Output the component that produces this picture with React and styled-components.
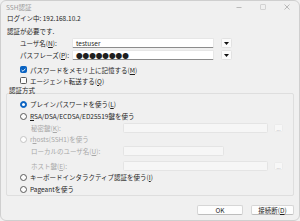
import React from "react";
import styled, { createGlobalStyle } from "styled-components";

let Global = createGlobalStyle`
  html, body {
    margin: 0;
    padding: 0;
    background: #f0f0f0;
  }
  body {
    font-family: "Noto Sans CJK JP", "Noto Sans", sans-serif;
    font-size: 6.5px;
    color: #1f1f1f;
  }
`;

let Window = styled.div`
  box-sizing: border-box;
  width: 300px;
  height: 221px;
  border: 1px solid #cfcfcf;
  border-radius: 6px;
  background: #f0f0f0;
  display: flex;
  flex-direction: column;
  overflow: hidden;
`;

let TitleBar = styled.div`
  height: 11px;
  display: flex;
  align-items: center;
  padding-left: 5px;
  color: #9a9a9a;
`;

let TitleText = styled.span`
  flex: 1;
`;

let Controls = styled.div`
  display: flex;
  align-items: center;
`;

let Control = styled.span`
  width: 24px;
  height: 11px;
  display: flex;
  align-items: center;
  justify-content: center;
`;

let Body = styled.div`
  padding: 0 5px;
  display: flex;
  flex-direction: column;
`;

let InfoLine = styled.div`
  line-height: 13px;
  height: 13px;
  padding-left: 1px;
`;

let FieldRow = styled.div`
  display: flex;
  align-items: center;
  height: 10px;
  margin-top: ${p => p.$top || 0}px;
  padding-left: ${p => p.$indent || 0}px;
  color: ${p => (p.$disabled ? "#a8a8a8" : "inherit")};
`;

let Label = styled.span`
  width: ${p => p.$width}px;
  flex: none;
`;

let Input = styled.div`
  box-sizing: border-box;
  width: ${p => p.$width}px;
  height: 10px;
  background: ${p => (p.$disabled ? "#f6f6f6" : "#fff")};
  border: 1px solid ${p => (p.$disabled ? "#e4e4e4" : "#e6e6e6")};
  border-bottom-color: ${p => (p.$disabled ? "#e4e4e4" : "#8c8c8c")};
  border-radius: 1.5px;
  display: flex;
  align-items: center;
  padding-left: 3px;
  color: #1f1f1f;
  line-height: 1;
`;

let Dots = styled.span`
  font-size: 6.6px;
  letter-spacing: 0;
`;

let DropButton = styled.div`
  box-sizing: border-box;
  width: 11px;
  height: 10px;
  margin-left: 7px;
  background: #fbfbfb;
  border: 1px solid #e2e2e2;
  border-radius: 1.5px;
  display: flex;
  align-items: center;
  justify-content: center;
`;

let BrowseButton = styled.div`
  box-sizing: border-box;
  width: 9px;
  height: 8px;
  margin-left: 6px;
  background: #f7f7f7;
  border: 1px solid #ebebeb;
  border-radius: 1.5px;
  color: #b5b5b5;
  font-size: 5px;
  display: flex;
  align-items: flex-end;
  justify-content: center;
  line-height: 5px;
`;

let CheckRow = styled.label`
  display: flex;
  align-items: center;
  height: 11px;
  padding-left: 14px;
  margin-top: ${p => p.$top || 0}px;
  gap: 3px;
`;

let Box = styled.span`
  box-sizing: border-box;
  width: 7px;
  height: 7px;
  border-radius: 1.5px;
  border: 1px solid ${p => (p.$checked ? "#0a63c2" : "#5a5a5a")};
  background: ${p => (p.$checked ? "#0a63c2" : "#fdfdfd")};
  display: flex;
  align-items: center;
  justify-content: center;
`;

let GroupTitle = styled.div`
  height: 8px;
  line-height: 8px;
  padding-left: 3px;
  position: relative;
  z-index: 1;
`;

let Group = styled.div`
  box-sizing: border-box;
  margin-top: -1px;
  height: 103px;
  border: 1px solid #dedede;
  border-radius: 2px;
  padding: 4px 0 0 13px;
  display: flex;
  flex-direction: column;
`;

let RadioRow = styled.div`
  display: flex;
  align-items: center;
  height: 12px;
  gap: 3px;
  color: ${p => (p.$disabled ? "#a8a8a8" : "inherit")};
`;

let Radio = styled.span`
  box-sizing: border-box;
  width: 7px;
  height: 7px;
  border-radius: 50%;
  border: 1px solid
    ${p => (p.$checked ? "#0a63c2" : p.$disabled ? "#c4c4c4" : "#5a5a5a")};
  background: ${p => (p.$checked ? "#0a63c2" : "#fdfdfd")};
  display: flex;
  align-items: center;
  justify-content: center;

  &::after {
    content: "";
    display: ${p => (p.$checked ? "block" : "none")};
    width: 3px;
    height: 3px;
    border-radius: 50%;
    background: #fff;
  }
`;

let SubRow = styled(FieldRow)`
  height: 11px;
  padding-left: 11px;
`;

let Spacer = styled.div`
  height: ${p => p.$h}px;
`;

let Footer = styled.div`
  display: flex;
  justify-content: flex-end;
  gap: 8px;
  margin-top: 9px;
`;

let Button = styled.button`
  box-sizing: border-box;
  width: ${p => p.$width}px;
  height: 10px;
  padding: 0;
  background: #fdfdfd;
  border: 1px solid #d6d6d6;
  border-bottom-color: #bdbdbd;
  border-radius: 2px;
  font-family: inherit;
  font-size: 6.5px;
  color: #1f1f1f;
  line-height: 1;
  display: flex;
  align-items: center;
  justify-content: center;
`;

let Key = styled.u`
  text-decoration-thickness: 0.5px;
  text-underline-offset: 1px;
`;

function Caret() {
  return (
    <svg width="5" height="3" viewBox="0 0 5 3">
      <path d="M0 0H5L2.5 3Z" fill="#111" />
    </svg>
  );
}

function Tick() {
  return (
    <svg width="5" height="4" viewBox="0 0 5 4">
      <path d="M0.6 2L2 3.3L4.4 0.7" fill="none" stroke="#fff" strokeWidth="0.9" />
    </svg>
  );
}

function App() {
  return (
    <>
      <Global />
      <Window>
        <TitleBar>
          <TitleText>SSH認証</TitleText>
          <Controls>
            <Control>
              <svg width="6" height="6" viewBox="0 0 6 6">
                <path d="M0.5 3.5H5.5" stroke="#a0a0a0" strokeWidth="0.7" />
              </svg>
            </Control>
            <Control>
              <svg width="6" height="6" viewBox="0 0 6 6">
                <rect x="0.5" y="0.5" width="5" height="5" rx="0.6" fill="none" stroke="#c4c4c4" strokeWidth="0.7" />
              </svg>
            </Control>
            <Control>
              <svg width="6" height="6" viewBox="0 0 6 6">
                <path d="M0.5 0.5L5.5 5.5M5.5 0.5L0.5 5.5" stroke="#a0a0a0" strokeWidth="0.7" />
              </svg>
            </Control>
          </Controls>
        </TitleBar>
        <Body>
          <InfoLine>ログイン中: 192.168.10.2</InfoLine>
          <InfoLine>認証が必要です.</InfoLine>
          <FieldRow $indent={14}>
            <Label $width={52}>
              ユーザ名(<Key>N</Key>):
            </Label>
            <Input $width={142}>testuser</Input>
            <DropButton>
              <Caret />
            </DropButton>
          </FieldRow>
          <FieldRow $indent={14} $top={2}>
            <Label $width={52}>
              パスフレーズ(<Key>P</Key>):
            </Label>
            <Input $width={142}>
              <Dots>●●●●●●●●</Dots>
            </Input>
            <DropButton>
              <Caret />
            </DropButton>
          </FieldRow>
          <CheckRow $top={4}>
            <Box $checked>
              <Tick />
            </Box>
            <span>
              パスワードをメモリ上に記憶する(<Key>M</Key>)
            </span>
          </CheckRow>
          <CheckRow>
            <Box />
            <span>
              エージェント転送する(<Key>Q</Key>)
            </span>
          </CheckRow>
          <GroupTitle>認証方式</GroupTitle>
          <Group>
            <RadioRow>
              <Radio $checked />
              <span>
                プレインパスワードを使う(<Key>L</Key>)
              </span>
            </RadioRow>
            <RadioRow>
              <Radio />
              <span>
                <Key>R</Key>SA/DSA/ECDSA/ED25519鍵を使う
              </span>
            </RadioRow>
            <SubRow $disabled>
              <Label $width={92}>
                秘密鍵(<Key>K</Key>):
              </Label>
              <Input $width={145} $disabled />
              <BrowseButton>...</BrowseButton>
            </SubRow>
            <RadioRow $disabled>
              <Radio $disabled />
              <span>
                r<Key>h</Key>osts(SSH1)を使う
              </span>
            </RadioRow>
            <SubRow $disabled>
              <Label $width={92}>
                ローカルのユーザ名(<Key>U</Key>):
              </Label>
              <Input $width={101} $disabled />
            </SubRow>
            <Spacer $h={4} />
            <SubRow $disabled>
              <Label $width={92}>
                ホスト鍵(<Key>E</Key>):
              </Label>
              <Input $width={145} $disabled />
              <BrowseButton>...</BrowseButton>
            </SubRow>
            <RadioRow>
              <Radio />
              <span>
                キーボードインタラクティブ認証を使う(<Key>I</Key>)
              </span>
            </RadioRow>
            <RadioRow>
              <Radio />
              <span>Pageantを使う</span>
            </RadioRow>
          </Group>
          <Footer>
            <Button $width={46}>OK</Button>
            <Button $width={43}>
              接続断(<Key>D</Key>)
            </Button>
          </Footer>
        </Body>
      </Window>
    </>
  );
}

export default App;
